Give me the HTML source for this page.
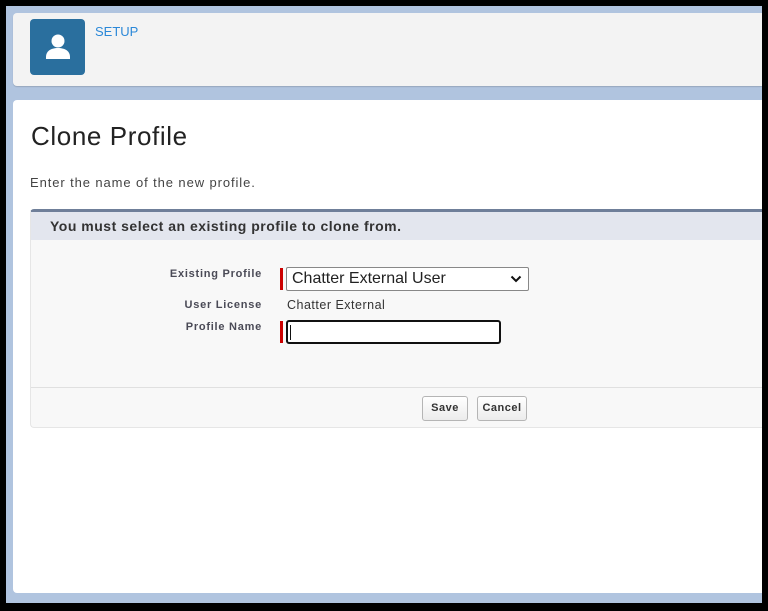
<!DOCTYPE html>
<html><head><style>
*{margin:0;padding:0;box-sizing:border-box}
body{width:768px;height:611px;background:#000;position:relative;overflow:hidden;font-family:"Liberation Sans",Arial,sans-serif}
.bg{position:absolute;left:6px;top:6px;width:756px;height:597px;background:#b0c4df}
.hdr{position:absolute;left:13px;top:13px;width:749px;height:73px;background:#f3f3f3;border-radius:4px 0 0 4px;box-shadow:0 1px 1px rgba(0,0,0,.15)}
.icon{position:absolute;left:30px;top:19px;width:55px;height:56px;background:#2a6f9e;border-radius:4px}
.setup{position:absolute;left:95px;top:24px;font-size:13px;color:#2b88d8}
.panel{position:absolute;left:13px;top:100px;width:749px;height:493px;background:#fff;border-radius:4px 0 0 4px}
h1{position:absolute;left:31px;top:121px;font-size:26px;font-weight:normal;color:#222;letter-spacing:0.6px}
.sub{position:absolute;left:30px;top:175px;font-size:13px;color:#444;letter-spacing:0.9px}
.sec{position:absolute;left:30px;top:209px;width:732px;height:219px;background:#f8f8f8;border-top:3px solid #6f7f99;border-radius:4px 0 0 4px;border-left:1px solid #e6e6e6;border-bottom:1px solid #e6e6e6}
.sh{position:absolute;left:0;top:0;width:100%;height:28px;background:#e3e6ee;font-size:14px;font-weight:bold;color:#333;padding:6px 0 0 19px;letter-spacing:0.5px}
.lbl{position:absolute;font-size:11px;font-weight:bold;color:#4a4a56;text-align:right;width:140px;letter-spacing:0.75px}
.val{position:absolute;font-size:12.5px;color:#333;letter-spacing:0.5px}
.req{position:absolute;width:3px;background:#c00}
.sel{position:absolute;left:286px;top:267px;width:243px;height:24px;border:1px solid #888;border-radius:2px;background:#fff;font-size:16px;color:#222;padding:2px 0 0 5px}
.inp{position:absolute;left:286px;top:320px;width:215px;height:24px;border:2px solid #111;border-radius:3px;background:#fff}
.foot{position:absolute;left:31px;top:387px;width:731px;border-top:1px solid #e0e0e0}
.btn{position:absolute;top:396px;height:25px;border:1px solid #b5b5b5;border-radius:3px;background:linear-gradient(#fff,#ececec);font-size:11px;font-weight:bold;color:#333;text-align:center;line-height:23px;letter-spacing:0.5px}
</style></head><body>
<div class="bg"></div>
<div class="hdr"></div>
<div class="icon"><svg width="55" height="56" viewBox="0 0 55 56"><circle cx="28" cy="22" r="6.5" fill="#fff"/><path d="M16 38c0-6 5-9 12-9s12 3 12 9v2H16z" fill="#fff"/></svg></div>
<div class="setup">SETUP</div>
<div class="panel"></div>
<h1>Clone Profile</h1>
<div class="sub">Enter the name of the new profile.</div>
<div class="sec"><div class="sh">You must select an existing profile to clone from.</div></div>
<div class="lbl" style="left:122px;top:268px">Existing Profile</div>
<div class="lbl" style="left:122px;top:299px">User License</div>
<div class="lbl" style="left:122px;top:321px">Profile Name</div>
<div class="req" style="left:280px;top:268px;height:22px"></div>
<div class="sel">Chatter External User<svg style="position:absolute;right:6px;top:7px" width="12" height="8" viewBox="0 0 12 8"><path d="M1.5 1.5l4.5 4.5 4.5-4.5" stroke="#111" stroke-width="2" fill="none"/></svg></div>
<div class="val" style="left:287px;top:298px">Chatter External</div>
<div class="req" style="left:280px;top:321px;height:22px"></div>
<div class="inp"><div style="position:absolute;left:2px;top:3px;width:1px;height:15px;background:#111"></div></div>
<div class="foot"></div>
<div class="btn" style="left:422px;width:46px">Save</div>
<div class="btn" style="left:477px;width:50px">Cancel</div>
</body></html>
